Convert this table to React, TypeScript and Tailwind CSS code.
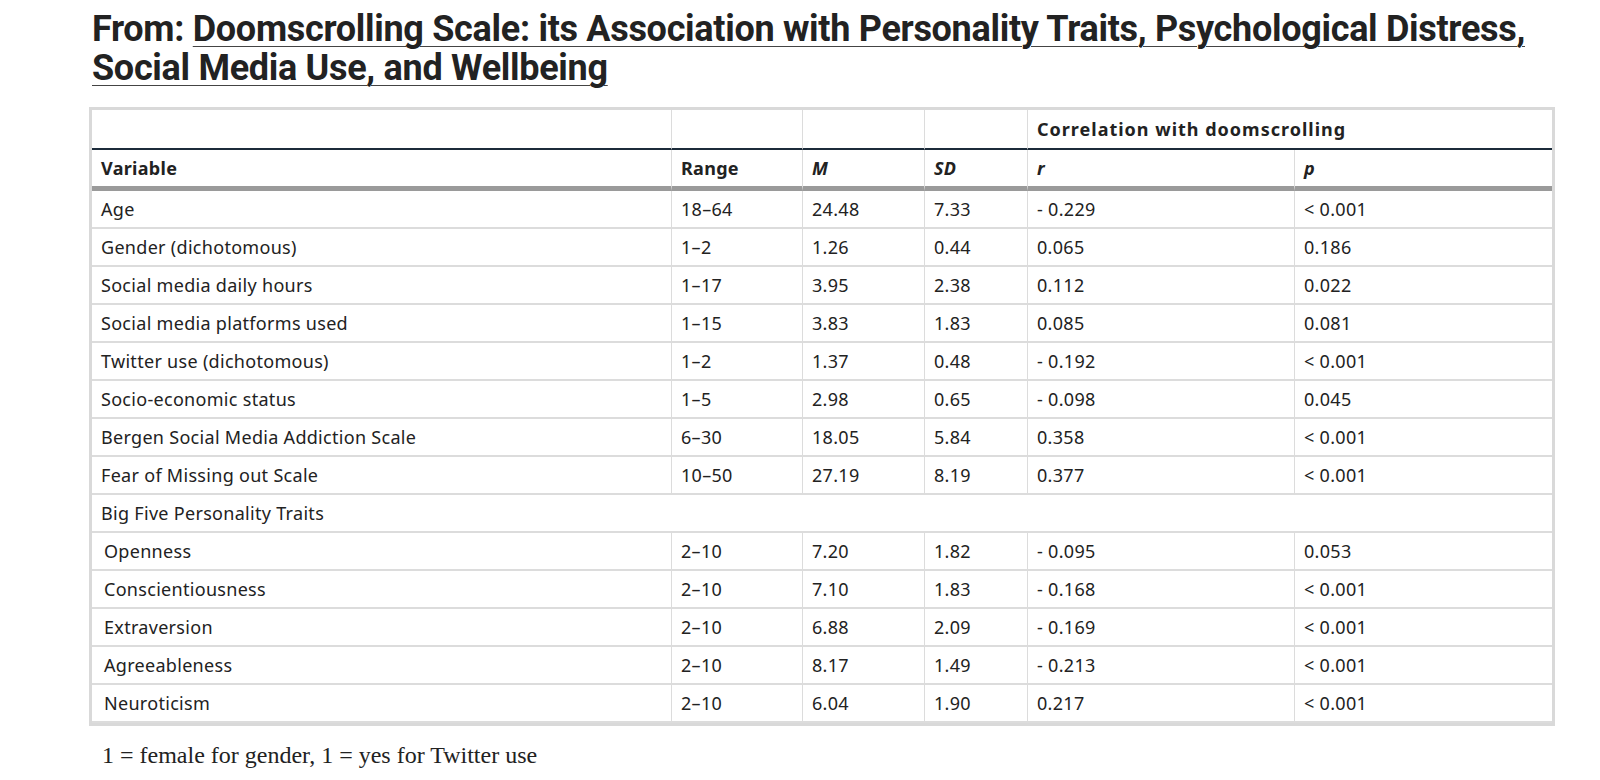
import React from "react";

type Row = {
    name: string;
    range: string;
    m: string;
    sd: string;
    r: string;
    p: string;
    sub?: boolean;
};

const rowsTop: Row[] = [
    { name: "Age", range: "18–64", m: "24.48", sd: "7.33", r: "- 0.229", p: "< 0.001" },
    { name: "Gender (dichotomous)", range: "1–2", m: "1.26", sd: "0.44", r: "0.065", p: "0.186" },
    { name: "Social media daily hours", range: "1–17", m: "3.95", sd: "2.38", r: "0.112", p: "0.022" },
    { name: "Social media platforms used", range: "1–15", m: "3.83", sd: "1.83", r: "0.085", p: "0.081" },
    { name: "Twitter use (dichotomous)", range: "1–2", m: "1.37", sd: "0.48", r: "- 0.192", p: "< 0.001" },
    { name: "Socio-economic status", range: "1–5", m: "2.98", sd: "0.65", r: "- 0.098", p: "0.045" },
    { name: "Bergen Social Media Addiction Scale", range: "6–30", m: "18.05", sd: "5.84", r: "0.358", p: "< 0.001" },
    { name: "Fear of Missing out Scale", range: "10–50", m: "27.19", sd: "8.19", r: "0.377", p: "< 0.001" },
];

const rowsBigFive: Row[] = [
    { name: "Openness", range: "2–10", m: "7.20", sd: "1.82", r: "- 0.095", p: "0.053", sub: true },
    { name: "Conscientiousness", range: "2–10", m: "7.10", sd: "1.83", r: "- 0.168", p: "< 0.001", sub: true },
    { name: "Extraversion", range: "2–10", m: "6.88", sd: "2.09", r: "- 0.169", p: "< 0.001", sub: true },
    { name: "Agreeableness", range: "2–10", m: "8.17", sd: "1.49", r: "- 0.213", p: "< 0.001", sub: true },
    { name: "Neuroticism", range: "2–10", m: "6.04", sd: "1.90", r: "0.217", p: "< 0.001", sub: true },
];

const cell = "px-[9px] py-[6px] border-b-2 border-r border-[#dcdcdc] align-middle";
const lastCell = "px-[9px] py-[6px] border-b-2 border-[#dcdcdc] align-middle";

const DataRow = ({ row }: { row: Row }) => (
    <tr>
        <td className={`${cell} ${row.sub ? "pl-[12px]" : ""}`}>{row.name}</td>
        <td className={cell}>{row.range}</td>
        <td className={cell}>{row.m}</td>
        <td className={cell}>{row.sd}</td>
        <td className={cell}>{row.r}</td>
        <td className={lastCell}>{row.p}</td>
    </tr>
);

export default function App() {
    return (
        <div className="w-[1600px] h-[780px] bg-white text-[#222] overflow-hidden">
            <div className="pl-[89px] pt-[10px]">
                {/* title */}
                <h1 className="pl-[3px] font-['Roboto',sans-serif] font-bold text-[36px] leading-[39px] tracking-[-0.3px] text-[#222] whitespace-nowrap">
                    From:{" "}
                    <a className="underline decoration-1 underline-offset-[5px] decoration-[#444]">
                        Doomscrolling Scale: its Association with Personality Traits, Psychological Distress,
                        <br />
                        Social Media Use, and Wellbeing
                    </a>
                </h1>

                {/* table */}
                <div className="mt-[19px] w-[1466px] border-[3px] border-[#d9d9d9]">
                    <table className="border-separate border-spacing-0 w-[1460px] table-fixed font-['Noto_Sans',sans-serif] text-[18px] leading-[24px] tracking-[0.3px]">
                        <colgroup>
                            <col className="w-[580px]" />
                            <col className="w-[131px]" />
                            <col className="w-[122px]" />
                            <col className="w-[103px]" />
                            <col className="w-[267px]" />
                            <col className="w-[257px]" />
                        </colgroup>
                        <thead>
                            <tr>
                                <th className="px-[9px] py-[7px] border-r border-b-2 border-r-[#dcdcdc] border-b-[#1c2b3a]"></th>
                                <th className="px-[9px] py-[7px] border-r border-b-2 border-r-[#dcdcdc] border-b-[#1c2b3a]"></th>
                                <th className="px-[9px] py-[7px] border-r border-b-2 border-r-[#dcdcdc] border-b-[#1c2b3a]"></th>
                                <th className="px-[9px] py-[7px] border-r border-b-2 border-r-[#dcdcdc] border-b-[#1c2b3a]"></th>
                                <th colSpan={2} className="px-[9px] py-[7px] border-b-2 border-b-[#1c2b3a] text-left font-bold tracking-[1px]">
                                    Correlation with doomscrolling
                                </th>
                            </tr>
                            <tr className="text-left">
                                <th className="px-[9px] py-[6px] border-r border-b-[5px] border-r-[#dcdcdc] border-b-[#9a9a9a] font-bold">Variable</th>
                                <th className="px-[9px] py-[6px] border-r border-b-[5px] border-r-[#dcdcdc] border-b-[#9a9a9a] font-bold">Range</th>
                                <th className="px-[9px] py-[6px] border-r border-b-[5px] border-r-[#dcdcdc] border-b-[#9a9a9a] font-bold italic">M</th>
                                <th className="px-[9px] py-[6px] border-r border-b-[5px] border-r-[#dcdcdc] border-b-[#9a9a9a] font-bold italic">SD</th>
                                <th className="px-[9px] py-[6px] border-r border-b-[5px] border-r-[#dcdcdc] border-b-[#9a9a9a] font-bold italic">r</th>
                                <th className="px-[9px] py-[6px] border-b-[5px] border-b-[#9a9a9a] font-bold italic">p</th>
                            </tr>
                        </thead>
                        <tbody>
                            {rowsTop.map((row) => (
                                <DataRow key={row.name} row={row} />
                            ))}
                            <tr>
                                <td colSpan={6} className={lastCell}>Big Five Personality Traits</td>
                            </tr>
                            {rowsBigFive.map((row) => (
                                <DataRow key={row.name} row={row} />
                            ))}
                        </tbody>
                    </table>
                </div>

                {/* footnote */}
                <p className="mt-[15px] pl-[13px] font-['Liberation_Serif',serif] text-[24px] leading-[28px] text-[#222]">
                    1 = female for gender, 1 = yes for Twitter use
                </p>
            </div>
        </div>
    );
}
